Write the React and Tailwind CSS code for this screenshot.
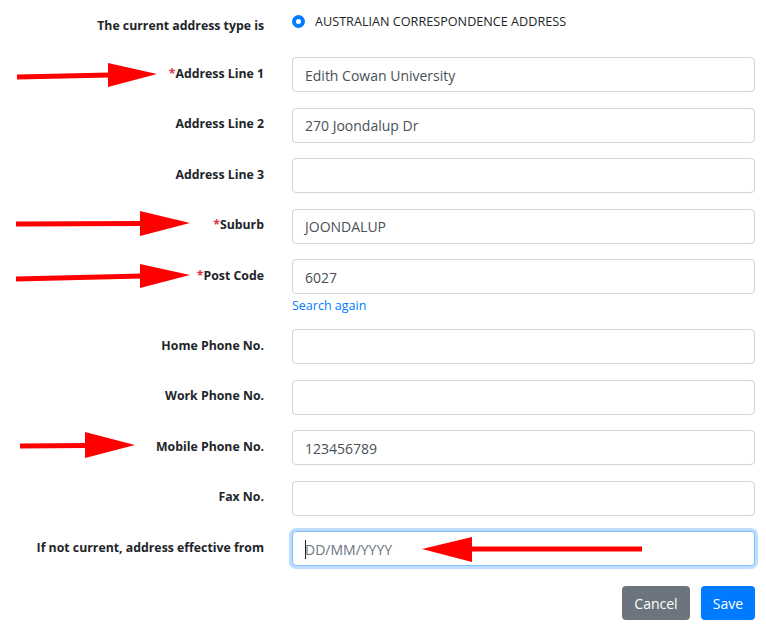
import React from "react";

const FONT = { fontFamily: '"Open Sans", "Noto Sans", Arial, sans-serif' };

function Label({ text, req }) {
  return (
    <div className="w-[264px] shrink-0 text-right pt-[6.5px] text-[12.3px] leading-[20px] font-bold text-[#212529]">
      {req && <span className="text-[#dc3545]">*</span>}
      {text}
    </div>
  );
}

function Field({ value }) {
  return (
    <div className="w-[463px] h-[35px] border border-[#ced4da] rounded-[4px] bg-white px-[12px] pt-[1px] flex items-center text-[14px] text-[#495057]">
      {value}
    </div>
  );
}

export default function App() {
  const rows = [
    { label: "Address Line 1", req: true, value: "Edith Cowan University" },
    { label: "Address Line 2", value: "270 Joondalup Dr" },
    { label: "Address Line 3", value: "" },
    { label: "Suburb", req: true, value: "JOONDALUP" },
  ];
  const rows2 = [
    { label: "Home Phone No.", value: "" },
    { label: "Work Phone No.", value: "" },
    { label: "Mobile Phone No.", value: "123456789" },
    { label: "Fax No.", value: "" },
  ];
  return (
    <div className="relative w-[766px] h-[629px] bg-white overflow-hidden" style={FONT}>
      <div className="flex flex-col">
        <div className="flex h-[57px] gap-[28px]">
          <div className="w-[264px] shrink-0 text-right pt-[15.5px] text-[12.3px] leading-[20px] font-bold text-[#212529]">
            The current address type is
          </div>
          <div className="flex items-center gap-[10px] pt-[12px] self-start">
            <span className="w-[13px] h-[13px] rounded-full bg-[#007bff] flex items-center justify-center">
              <span className="w-[5px] h-[5px] rounded-full bg-white" />
            </span>
            <span className="text-[12.65px] leading-[18px] text-[#212529]">AUSTRALIAN CORRESPONDENCE ADDRESS</span>
          </div>
        </div>
        {rows.map((r) => (
          <div key={r.label} className="flex gap-[28px] mb-[15.5px]">
            <Label text={r.label} req={r.req} />
            <Field value={r.value} />
          </div>
        ))}
        <div className="flex gap-[28px] mb-[15.5px]">
          <Label text="Post Code" req />
          <div className="flex flex-col">
            <Field value="6027" />
            <div className="h-[19.5px] pt-[3px] text-[12.5px] leading-[17px] text-[#007bff]">Search again</div>
          </div>
        </div>
        {rows2.map((r) => (
          <div key={r.label} className="flex gap-[28px] mb-[15.5px]">
            <Label text={r.label} />
            <Field value={r.value} />
          </div>
        ))}
        <div className="flex gap-[28px]">
          <Label text="If not current, address effective from" />
          <div className="relative w-[463px] h-[35px] border border-[#80bdff] rounded-[4px] bg-white px-[12px] pt-[1px] flex items-center text-[14px] text-[#6c757d] shadow-[0_0_0_3px_rgba(0,123,255,0.25)]">
            DD/MM/YYYY
            <span className="absolute left-[12px] top-[8px] w-[1px] h-[19px] bg-[#212529]" />
          </div>
        </div>
        <div className="flex justify-end gap-[11px] mt-[20px] pr-[11px]">
          <button className="h-[34px] w-[68px] rounded-[4px] bg-[#6c757d] text-white text-[14px]">Cancel</button>
          <button className="h-[34px] w-[54px] rounded-[4px] bg-[#007bff] text-white text-[14px]">Save</button>
        </div>
      </div>
      <svg className="absolute left-0 top-0 pointer-events-none" width="766" height="629" viewBox="0 0 766 629">
        <g fill="#ff0000" stroke="none">
          <polygon points="17,74.5 110,72.5 110,77.5 17,79.5" />
          <polygon points="108,63 157,74 108,87" />
          <polygon points="16,221.5 142,221 142,226 16,226.5" />
          <polygon points="140,211 190,223 140,236" />
          <polygon points="16,276.5 142,273.5 142,278.5 16,281.5" />
          <polygon points="140,264 190,275 140,288" />
          <polygon points="20,443.5 87,443 87,448 20,448.5" />
          <polygon points="85,432 135,445 85,458" />
          <polygon points="470,546.5 642,546.5 642,551.5 470,551.5" />
          <polygon points="472,537 422,549 472,562" />
        </g>
      </svg>
    </div>
  );
}
